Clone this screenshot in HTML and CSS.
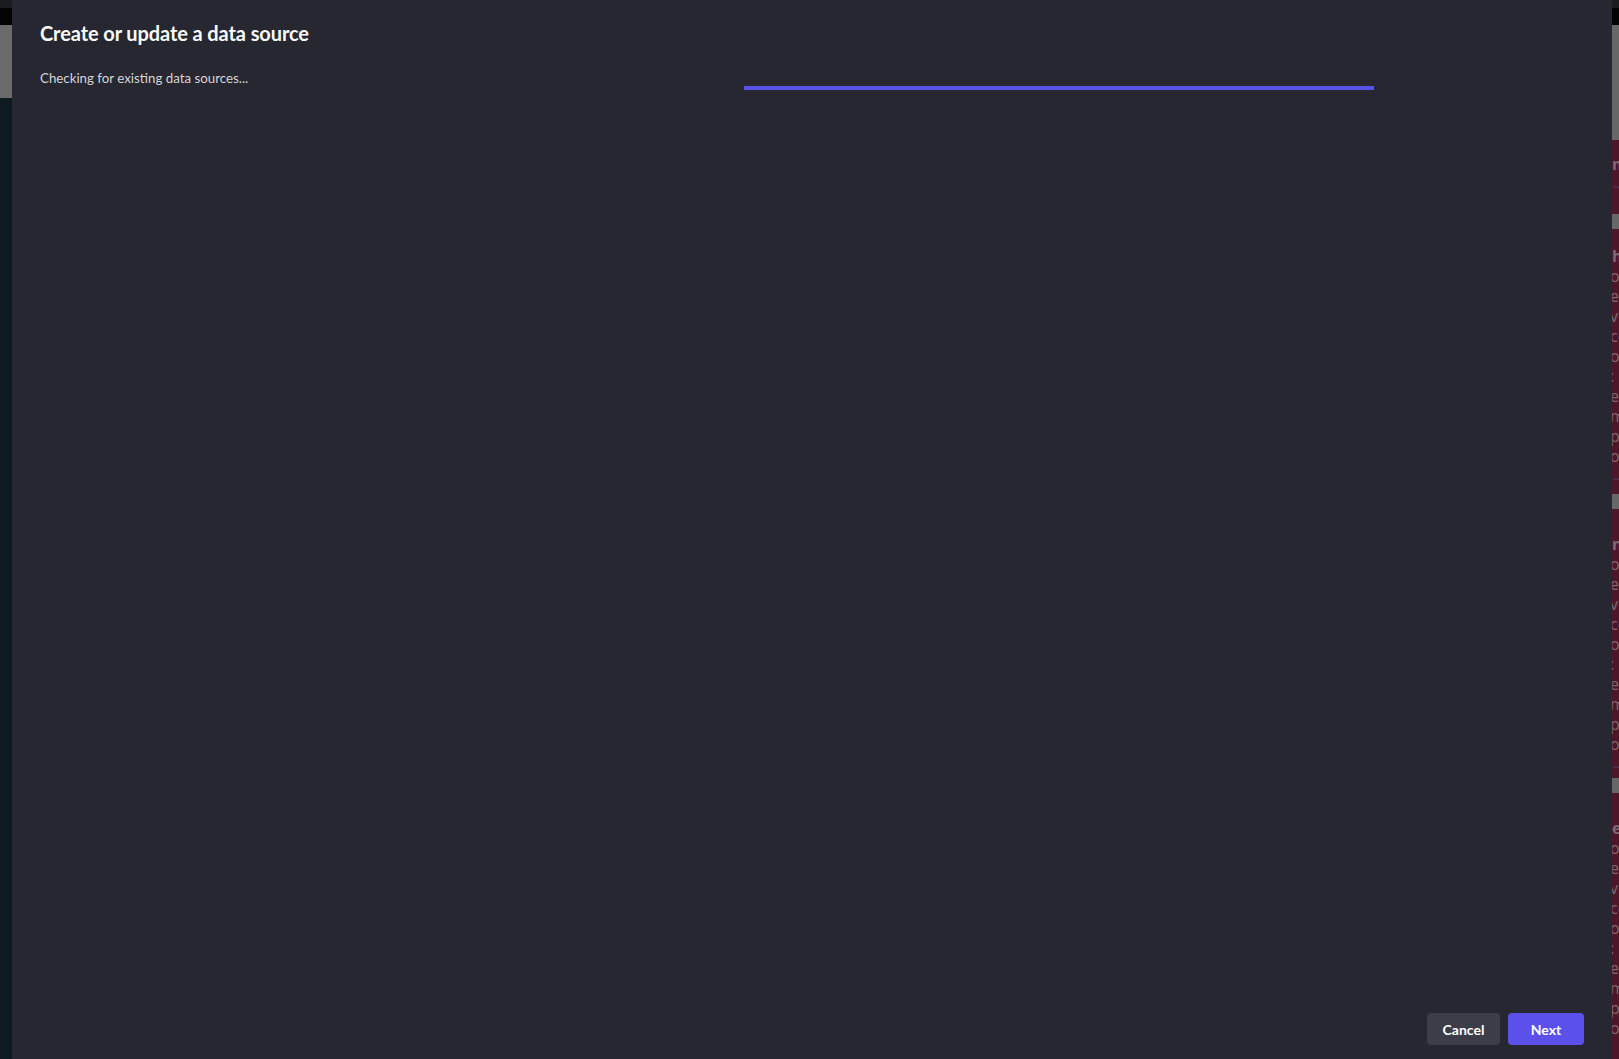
FILE: index.html
```html
<!DOCTYPE html>
<html lang="en">
<head>
<meta charset="utf-8">
<title>Create or update a data source</title>
<link rel="stylesheet" href="styles.css">
</head>
<body>
<div class="screen">
  <div class="side side-left">
    <div class="s-top"></div>
    <div class="s-black"></div>
    <div class="sl-gray"></div>
    <div class="sl-rest"></div>
  </div>
  <div class="modal">
    <div class="modal-body">
      <h1 class="title">Create or update a data source</h1>
      <div class="status-row">
        <p class="status">Checking for existing data sources...</p>
      </div>
      <div class="progress-track">
        <div class="progress-bar"></div>
      </div>
    </div>
    <div class="modal-footer">
      <button class="btn btn-secondary">Cancel</button>
      <button class="btn btn-primary">Next</button>
    </div>
  </div>
  <div class="side side-right">
    <div class="s-top"></div>
    <div class="s-black"></div>
    <div class="sr-gray"></div>
    <div class="sr-content">
      <div class="sr-head">
        <div class="sr-line strong">m</div>
        <div class="sr-line dots">...</div>
      </div>
      <div class="sr-sep"></div>
      <div class="sr-block b1">
        <div class="sr-line strong">h</div>
        <div class="sr-line">ow</div>
        <div class="sr-line">ex</div>
        <div class="sr-line">ve</div>
        <div class="sr-line">co</div>
        <div class="sr-line">or</div>
        <div class="sr-line">:</div>
        <div class="sr-line">e</div>
        <div class="sr-line">m</div>
        <div class="sr-line">p</div>
        <div class="sr-line">oi</div>
        <div class="sr-line dots">...</div>
      </div>
      <div class="sr-sep"></div>
      <div class="sr-block b2">
        <div class="sr-line strong">n</div>
        <div class="sr-line">ow</div>
        <div class="sr-line">ex</div>
        <div class="sr-line">ve</div>
        <div class="sr-line">co</div>
        <div class="sr-line">or</div>
        <div class="sr-line">:</div>
        <div class="sr-line">e</div>
        <div class="sr-line">m</div>
        <div class="sr-line">p</div>
        <div class="sr-line">oi</div>
        <div class="sr-line dots">...</div>
      </div>
      <div class="sr-sep"></div>
      <div class="sr-block b2">
        <div class="sr-line strong">e</div>
        <div class="sr-line">ow</div>
        <div class="sr-line">ex</div>
        <div class="sr-line">ve</div>
        <div class="sr-line">co</div>
        <div class="sr-line">or</div>
        <div class="sr-line">:</div>
        <div class="sr-line">e</div>
        <div class="sr-line">m</div>
        <div class="sr-line">p</div>
        <div class="sr-line">oi</div>
      </div>
    </div>
  </div>
</div>
</body>
</html>
```

FILE: styles.css
```css
* { box-sizing: border-box; }
html, body {
  margin: 0;
  padding: 0;
  height: 100%;
  overflow: hidden;
  background: #0e1a21;
  font-family: Lato, "Open Sans", sans-serif;
}
.screen {
  display: grid;
  grid-template-columns: 12px 1600px 7px;
  height: 1059px;
}
.side { display: flex; flex-direction: column; overflow: hidden; }
.s-top { height: 8px; background: #1b1c20; flex: none; }
.s-black { height: 17px; background: #040404; flex: none; }
.sl-gray { height: 73px; background: #6b6b6b; flex: none; }
.sl-rest { flex: 1; background: #0f1a20; }

.sr-gray { height: 115px; background: #676767; flex: none; }
.sr-content {
  flex: 1;
  background: #4d1629;
  display: flex;
  flex-direction: column;
}
.sr-head { padding-top: 14px; height: 74px; flex: none; }
.sr-sep { height: 15px; background: #676767; flex: none; }
.sr-line {
  color: #7d6b72;
  font-family: "Open Sans", sans-serif;
  font-size: 16px;
  line-height: 20px;
  height: 20px;
  margin-left: -2px;
  white-space: nowrap;
}
.sr-line.strong { font-weight: 700; margin-left: 0; }
.sr-line.dots { color: #4a4f8a; font-size: 12px; }
.sr-block { flex: none; }
.b1 { padding: 17px 0 8px; }
.b2 { padding: 25px 0 4px; }

.modal {
  background: #262730;
  display: flex;
  flex-direction: column;
  padding: 0 28px 14px;
}
.modal-body { flex: 1; }
.title {
  margin: 0;
  padding-top: 20px;
  color: #fafafa;
  font-size: 20px;
  font-weight: 700;
  line-height: 26px;
  letter-spacing: -0.1px;
}
.status-row { margin-top: 23px; }
.status {
  margin: 0;
  color: #d5d5da;
  font-size: 13.3px;
  line-height: 18px;
}
.progress-track {
  margin-top: -1px;
  margin-left: 704px;
  width: 630px;
  height: 4px;
}
.progress-bar {
  height: 4px;
  background: #5a52e6;
}
.modal-footer {
  display: flex;
  justify-content: flex-end;
  gap: 8px;
}
.btn {
  height: 32px;
  border: none;
  border-radius: 4px;
  color: #ffffff;
  font-family: Lato, "Open Sans", sans-serif;
  font-size: 14px;
  font-weight: 700;
  padding: 0 12px;
  cursor: pointer;
}
.btn-secondary { background: #3c3d48; width: 73px; }
.btn-primary { background: #5b50ea; width: 76px; }
```
